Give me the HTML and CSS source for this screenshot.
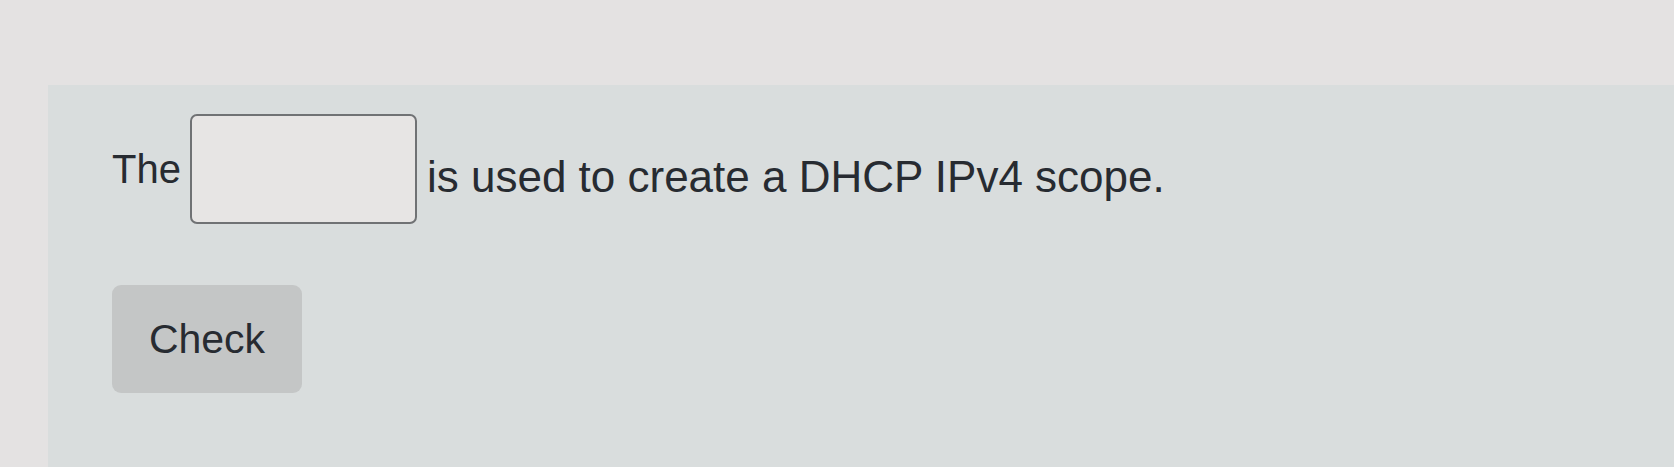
FILE: index.html
```html
<!DOCTYPE html>
<html lang="en">
<head>
<meta charset="utf-8">
<title>DHCP question</title>
<link rel="stylesheet" href="styles.css">
</head>
<body>
  <div class="topbar"></div>
  <main class="panel">
    <div class="question">
      <span class="word">The</span>
      <input class="blank" type="text" aria-label="answer">
      <span class="rest">is used to create a DHCP IPv4 scope.</span>
    </div>
    <button class="check" type="button">Check</button>
  </main>
</body>
</html>
```
FILE: styles.css
```css
html, body {
  margin: 0;
  height: 100%;
}

body {
  background: #e4e2e2;
  font-family: "Liberation Sans", Arial, sans-serif;
  color: #272b31;
  overflow: hidden;
}

.topbar {
  height: 85px;
}

.panel {
  margin-left: 48px;
  min-height: 382px;
  background: #d9dddd;
  padding: 29px 0 0 64px;
  box-sizing: border-box;
  display: flex;
  flex-direction: column;
  align-items: flex-start;
  gap: 61px;
}

.question {
  display: flex;
  align-items: center;
  line-height: 1;
}

.word {
  margin-right: 9px;
  font-size: 40px;
}

.blank {
  width: 227px;
  height: 110px;
  box-sizing: border-box;
  border: 2px solid #707274;
  border-radius: 7px;
  background: #e7e5e4;
  margin: 0 10px 0 0;
  padding: 0;
  font: inherit;
}

/* sits a little below the input's centre line */
.rest {
  font-size: 44px;
  margin-top: 16px;
}

.check {
  width: 190px;
  height: 108px;
  border: none;
  border-radius: 9px;
  background: #c4c6c6;
  color: #272b31;
  font-family: "Liberation Sans", Arial, sans-serif;
  font-size: 41px;
  padding: 0;
}
```
